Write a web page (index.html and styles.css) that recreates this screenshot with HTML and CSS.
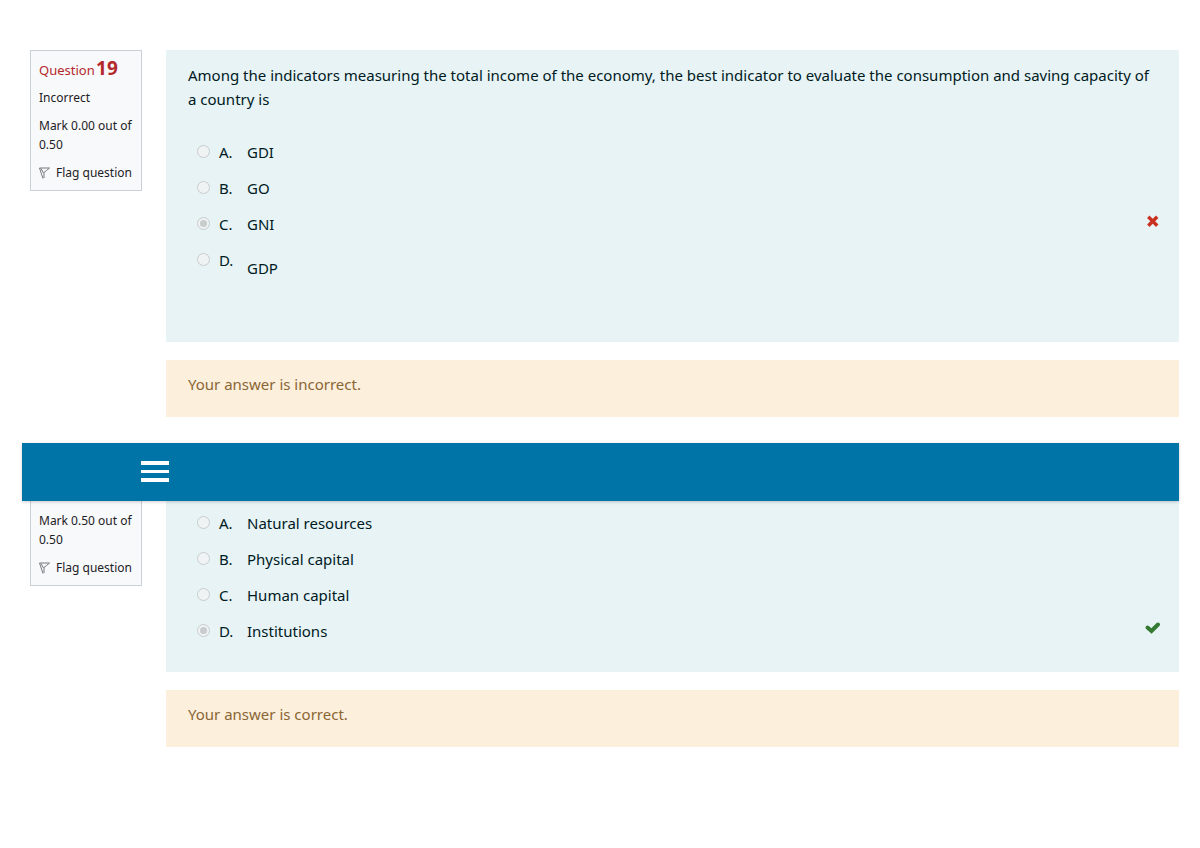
FILE: index.html
```
<!DOCTYPE html>
<html lang="en">
<head>
<meta charset="utf-8">
<title>Quiz review</title>
<link rel="stylesheet" href="styles.css">
</head>
<body>
<main class="page">
  <section class="question">
    <aside class="info">
      <h2 class="number">Question <strong>19</strong></h2>
      <p>Incorrect</p>
      <p>Mark 0.00 out of 0.50</p>
      <button class="flag" type="button">
        <svg width="11" height="12" viewBox="0 0 11 12" fill="none" stroke="#74797d"><path d="M.5 1 4 11.500M.5 1H10.500L7.500 3.500 5 5.500V11M2 1.500 4.500 6"/></svg>
        Flag question
      </button>
    </aside>
    <div class="content">
      <div class="formulation">
        <p class="prompt">Among the indicators measuring the total income of the economy, the best indicator to evaluate the consumption and saving capacity of a country is</p>
        <div class="answers">
          <div class="answer"><input type="radio" name="q19" id="q19a" disabled><label for="q19a"><span class="letter">A.</span><span>GDI</span></label></div>
          <div class="answer"><input type="radio" name="q19" id="q19b" disabled><label for="q19b"><span class="letter">B.</span><span>GO</span></label></div>
          <div class="answer"><input type="radio" name="q19" id="q19c" checked disabled><label for="q19c"><span class="letter">C.</span><span>GNI</span></label>
            <svg class="mark" role="img" aria-label="Incorrect" width="18" height="16" viewBox="0 0 18 16"><path d="M6.500 5 13 11.500M13 5 6.500 11.500" stroke="#ca3120" stroke-width="3.400" stroke-linecap="square"/></svg></div>
          <div class="answer"><input type="radio" name="q19" id="q19d" disabled><label for="q19d"><span class="letter">D.</span><span class="lowered">GDP</span></label></div>
        </div>
      </div>
      <div class="feedback">Your answer is incorrect.</div>
    </div>
  </section>
  <header class="bar">
    <button class="menu" type="button" aria-label="Menu">
      <svg width="28" height="22" viewBox="0 0 28 22" fill="#fff"><path d="M0 0h28v4H0zM0 9h28v3H0zM0 17h28v4H0z"/></svg>
    </button>
  </header>
  <section class="question continued">
    <aside class="info">
      <p>Mark 0.50 out of 0.50</p>
      <button class="flag" type="button">
        <svg width="11" height="12" viewBox="0 0 11 12" fill="none" stroke="#74797d"><path d="M.5 1 4 11.500M.5 1H10.500L7.500 3.500 5 5.500V11M2 1.500 4.500 6"/></svg>
        Flag question
      </button>
    </aside>
    <div class="content">
      <div class="formulation">
        <div class="answers">
          <div class="answer"><input type="radio" name="q20" id="q20a" disabled><label for="q20a"><span class="letter">A.</span><span>Natural resources</span></label></div>
          <div class="answer"><input type="radio" name="q20" id="q20b" disabled><label for="q20b"><span class="letter">B.</span><span>Physical capital</span></label></div>
          <div class="answer"><input type="radio" name="q20" id="q20c" disabled><label for="q20c"><span class="letter">C.</span><span>Human capital</span></label></div>
          <div class="answer"><input type="radio" name="q20" id="q20d" checked disabled><label for="q20d"><span class="letter">D.</span><span>Institutions</span></label>
            <svg class="mark" role="img" aria-label="Correct" width="18" height="16" viewBox="0 0 18 16"><path d="M4.500 7.500 8.500 11 15 4.500" fill="none" stroke="#357a32" stroke-width="4" stroke-linecap="round"/></svg></div>
        </div>
      </div>
      <div class="feedback">Your answer is correct.</div>
    </div>
  </section>
</main>
</body>
</html>
```
FILE: styles.css
```
* { box-sizing: border-box; }
body {
  margin: 0;
  background: #fff;
  color: #1d2125;
  font-family: "Segoe UI", "Noto Sans", sans-serif;
  font-size: 15px;
  line-height: 24px;
}
p, h2 { margin: 0; }
.page { padding: 50px 21px 40px 22px; }
.question {
  display: flex;
  align-items: flex-start;
  gap: 24px;
  padding-left: 8px;
}
.info {
  flex: 0 0 112px;
  display: flex;
  flex-direction: column;
  gap: 9px;
  padding: 8px 0 8px 8px;
  border: 1px solid #cad0d7;
  background: #f8f9fb;
  font-size: 12px;
  line-height: 19px;
}
.number {
  color: #b3292b;
  font-size: 13px;
  font-weight: 400;
  line-height: 18px;
}
.number strong { font-size: 19px; margin-left: -2px; }
.flag {
  display: flex;
  align-items: center;
  gap: 6px;
  padding: 0;
  border: 0;
  background: none;
  color: inherit;
  font: inherit;
  white-space: nowrap;
}
.content { flex: 1; }
.formulation {
  padding: 13px 18px 58px 22px;
  background: #e7f3f5;
  color: #001a1e;
}
.prompt { margin-bottom: 29px; }
.answers { padding-left: 9px; }
.answer {
  display: flex;
  align-items: flex-start;
  min-height: 36px;
}
.answer input {
  appearance: none;
  display: grid;
  place-items: center;
  width: 13px;
  height: 13px;
  margin: 5px 9px 0 0;
  border: 1px solid #c8cccd;
  border-radius: 50%;
  background: #eff3f4;
}
.answer input:checked::before {
  content: "";
  width: 7px;
  height: 7px;
  border-radius: 50%;
  background: #c8cccd;
}
.answer label { flex: 1; display: flex; }
.letter { width: 28px; }
.lowered { padding-top: 8px; }
.mark { margin-top: 1px; }
.feedback {
  margin-top: 18px;
  padding: 12px 22px 21px;
  background: #fcefdc;
  color: #8a6534;
}
.bar {
  position: relative;
  display: flex;
  align-items: center;
  height: 58px;
  margin-top: 26px;
  padding-left: 119px;
  background: #0073a7;
  box-shadow: 0 1px 3px rgba(0, 0, 0, 0.2);
}
.menu {
  display: flex;
  padding: 0;
  border: 0;
  background: none;
}
.continued .info { border-top: 0; padding-top: 10px; }
.continued .formulation { padding-top: 10px; padding-bottom: 17px; }
```
